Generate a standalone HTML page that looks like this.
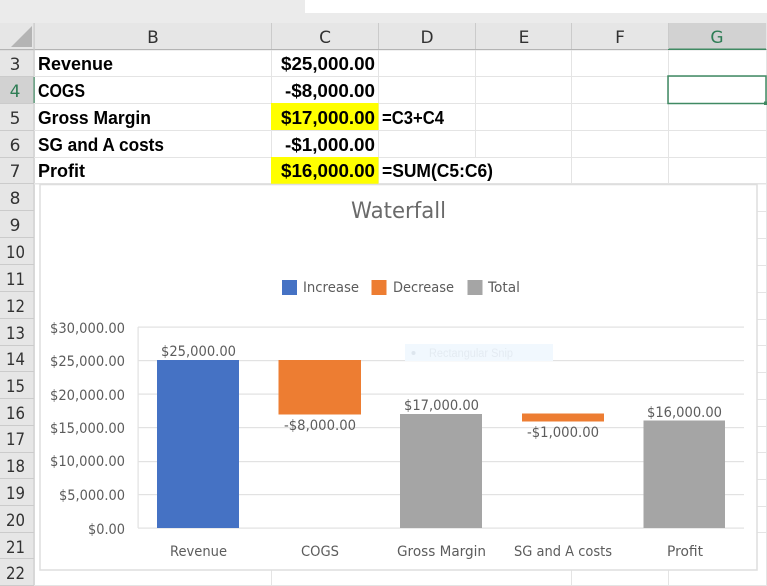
<!DOCTYPE html>
<html><head><meta charset="utf-8"><style>
html,body{margin:0;padding:0;background:#fff;width:767px;height:586px;overflow:hidden}
svg{display:block}
text{font-family:"Liberation Sans",sans-serif}
.h{font-family:"DejaVu Sans",sans-serif;font-size:17px;fill:#333;text-anchor:middle}
.b{font-size:18px;font-weight:bold;fill:#000}
.l{font-family:"DejaVu Sans",sans-serif;font-size:14.5px;fill:#5c5c5c}
</style></head><body>
<svg width="767" height="586" viewBox="0 0 767 586" xmlns="http://www.w3.org/2000/svg">
<g filter="url(#s)">
<rect width="767" height="586" fill="#fff"/>
<rect width="767" height="23" fill="#ebebeb"/>
<rect x="305" width="462" height="13" fill="#fff"/>
<rect y="23" width="767" height="26" fill="#e6e6e6"/>
<rect y="49" width="34" height="537" fill="#e6e6e6"/>
<rect x="0" y="76" width="34" height="27" fill="#d2d2d2"/>
<rect x="668" y="23" width="98" height="26" fill="#d2d2d2"/>
<rect x="0" y="49" width="767" height="1.2" fill="#b4b4b4"/>
<rect x="668" y="48.5" width="98" height="1.5" fill="#3f8a63"/>
<rect x="33.5" y="23" width="1.2" height="563" fill="#c8c8c8"/>
<rect x="33.5" y="76" width="1.2" height="27" fill="#3f8a63"/>
<polygon points="11,47 32,47 32,26" fill="#b4b4b4"/>
<g fill="#cbcbcb">
<rect x="271" y="23" width="1" height="26"/><rect x="378" y="23" width="1" height="26"/><rect x="475" y="23" width="1" height="26"/><rect x="571" y="23" width="1" height="26"/><rect x="668" y="23" width="1" height="26"/>
<rect y="183" width="34" height="1"/><rect y="210" width="34" height="1"/><rect y="237" width="34" height="1"/><rect y="264" width="34" height="1"/><rect y="291" width="34" height="1"/><rect y="318" width="34" height="1"/><rect y="345" width="34" height="1"/><rect y="371" width="34" height="1"/><rect y="398" width="34" height="1"/><rect y="425" width="34" height="1"/><rect y="452" width="34" height="1"/><rect y="478" width="34" height="1"/><rect y="505" width="34" height="1"/><rect y="532" width="34" height="1"/><rect y="558" width="34" height="1"/><rect y="585" width="34" height="1"/>
<rect y="76" width="34" height="1"/><rect y="103" width="34" height="1"/><rect y="130" width="34" height="1"/><rect y="157" width="34" height="1"/>
</g>
<g fill="#e4e4e4">
<rect x="271" y="50" width="1" height="133"/><rect x="378" y="50" width="1" height="133"/><rect x="475" y="50" width="1" height="107"/><rect x="571" y="50" width="1" height="133"/><rect x="668" y="50" width="1" height="133"/><rect x="766" y="50" width="1" height="536"/>
<rect x="34" y="76" width="733" height="1"/><rect x="34" y="103" width="733" height="1"/><rect x="34" y="130" width="733" height="1"/><rect x="34" y="157" width="733" height="1"/><rect x="34" y="183" width="733" height="1.5"/>
<rect x="271" y="570" width="1" height="16"/><rect x="571" y="570" width="1" height="16"/><rect x="668" y="570" width="1" height="16"/>
<rect x="757" y="211" width="10" height="1"/><rect x="757" y="238" width="10" height="1"/><rect x="757" y="265" width="10" height="1"/><rect x="757" y="292" width="10" height="1"/><rect x="757" y="319" width="10" height="1"/><rect x="757" y="345" width="10" height="1"/><rect x="757" y="372" width="10" height="1"/><rect x="757" y="399" width="10" height="1"/><rect x="757" y="426" width="10" height="1"/><rect x="757" y="452" width="10" height="1"/><rect x="757" y="479" width="10" height="1"/><rect x="757" y="506" width="10" height="1"/><rect x="757" y="532" width="10" height="1"/><rect x="34" y="585" width="733" height="1"/>
</g>
<rect x="271" y="103" width="107.5" height="27" fill="#ffff00"/>
<rect x="271" y="157" width="107.5" height="27" fill="#ffff00"/>
<rect x="668" y="76" width="98" height="27.5" fill="none" stroke="#3f8a63" stroke-width="1.5"/>
<rect x="764" y="101.5" width="3" height="3.5" fill="#3f8a63"/>

<text class="h" x="153" y="43">B</text><text class="h" x="325" y="43">C</text><text class="h" x="427" y="43">D</text><text class="h" x="524" y="43">E</text><text class="h" x="620" y="43">F</text><text class="h" x="717" y="43" style="fill:#2f7d55">G</text>
<text class="h" x="15" y="70">3</text><text class="h" x="15" y="97" style="fill:#2f7d55">4</text><text class="h" x="15" y="124">5</text><text class="h" x="15" y="151">6</text><text class="h" x="15" y="177">7</text><text class="h" x="15" y="204">8</text><text class="h" x="15" y="231">9</text><text class="h" x="15.500" y="258" textLength="19" lengthAdjust="spacingAndGlyphs">10</text><text class="h" x="15.500" y="285" textLength="19" lengthAdjust="spacingAndGlyphs">11</text><text class="h" x="15.500" y="312" textLength="19" lengthAdjust="spacingAndGlyphs">12</text><text class="h" x="15.500" y="339" textLength="19" lengthAdjust="spacingAndGlyphs">13</text><text class="h" x="15.500" y="365" textLength="19" lengthAdjust="spacingAndGlyphs">14</text><text class="h" x="15.500" y="392" textLength="19" lengthAdjust="spacingAndGlyphs">15</text><text class="h" x="15.500" y="419" textLength="19" lengthAdjust="spacingAndGlyphs">16</text><text class="h" x="15.500" y="445" textLength="19" lengthAdjust="spacingAndGlyphs">17</text><text class="h" x="15.500" y="472" textLength="19" lengthAdjust="spacingAndGlyphs">18</text><text class="h" x="15.500" y="499" textLength="19" lengthAdjust="spacingAndGlyphs">19</text><text class="h" x="15.500" y="526" textLength="19" lengthAdjust="spacingAndGlyphs">20</text><text class="h" x="15.500" y="553" textLength="19" lengthAdjust="spacingAndGlyphs">21</text><text class="h" x="15.500" y="579" textLength="19" lengthAdjust="spacingAndGlyphs">22</text>
<text class="b" x="38" y="70" textLength="75" lengthAdjust="spacingAndGlyphs">Revenue</text>
<text class="b" x="38" y="97" textLength="47" lengthAdjust="spacingAndGlyphs">COGS</text>
<text class="b" x="38" y="124" textLength="113" lengthAdjust="spacingAndGlyphs">Gross Margin</text>
<text class="b" x="38" y="151" textLength="126" lengthAdjust="spacingAndGlyphs">SG and A costs</text>
<text class="b" x="38" y="177" textLength="47" lengthAdjust="spacingAndGlyphs">Profit</text>
<text class="b" x="281" y="70" textLength="94" lengthAdjust="spacingAndGlyphs">$25,000.00</text>
<text class="b" x="285" y="97" textLength="90" lengthAdjust="spacingAndGlyphs">-$8,000.00</text>
<text class="b" x="281" y="124" textLength="94" lengthAdjust="spacingAndGlyphs">$17,000.00</text>
<text class="b" x="285" y="151" textLength="90" lengthAdjust="spacingAndGlyphs">-$1,000.00</text>
<text class="b" x="281" y="177" textLength="94" lengthAdjust="spacingAndGlyphs">$16,000.00</text>
<text class="b" x="382" y="124" textLength="62" lengthAdjust="spacingAndGlyphs">=C3+C4</text>
<text class="b" x="382" y="177" textLength="111" lengthAdjust="spacingAndGlyphs">=SUM(C5:C6)</text>

<rect x="40" y="184.500" width="717" height="385.500" fill="#fff" stroke="#dedede" stroke-width="1.5"/>
<text x="398.500" y="218" text-anchor="middle" font-size="22" fill="#6b6b6b" style="font-family:'DejaVu Sans',sans-serif" textLength="95" lengthAdjust="spacingAndGlyphs">Waterfall</text>
<rect x="282" y="280" width="15" height="15" fill="#4472c4"/>
<rect x="371.500" y="280" width="15" height="15" fill="#ed7d31"/>
<rect x="467.500" y="280" width="15" height="15" fill="#a5a5a5"/>
<text class="l" x="303" y="292" textLength="56" lengthAdjust="spacingAndGlyphs">Increase</text>
<text class="l" x="393" y="292" textLength="61" lengthAdjust="spacingAndGlyphs">Decrease</text>
<text class="l" x="488" y="292" textLength="32" lengthAdjust="spacingAndGlyphs">Total</text>

<g fill="#e2e2e2">
<rect x="138" y="326.500" width="606" height="1.2"/><rect x="138" y="360" width="606" height="1.2"/><rect x="138" y="393.500" width="606" height="1.2"/><rect x="138" y="427" width="606" height="1.2"/><rect x="138" y="461" width="606" height="1.2"/><rect x="138" y="494" width="606" height="1.2"/><rect x="138" y="527.500" width="606" height="1.2"/><rect x="137.500" y="327" width="1.2" height="201"/>
</g>
<rect x="405" y="344" width="148" height="17" fill="#f1f8fe"/>
<circle cx="413.500" cy="353" r="2" fill="#dde6ee"/>
<text x="429" y="357" font-size="11.500" fill="#e4ebf2" textLength="84" lengthAdjust="spacingAndGlyphs">Rectangular Snip</text>
<rect x="157" y="360" width="82" height="168" fill="#4472c4"/>
<rect x="278.500" y="360" width="82.500" height="54.500" fill="#ed7d31"/>
<rect x="400" y="414" width="82" height="114" fill="#a5a5a5"/>
<rect x="522" y="413.500" width="82" height="8" fill="#ed7d31"/>
<rect x="643.500" y="420.500" width="81.500" height="107.500" fill="#a5a5a5"/>

<text class="l" x="50" y="333" textLength="75" lengthAdjust="spacingAndGlyphs">$30,000.00</text>
<text class="l" x="50" y="366" textLength="75" lengthAdjust="spacingAndGlyphs">$25,000.00</text>
<text class="l" x="50" y="400" textLength="75" lengthAdjust="spacingAndGlyphs">$20,000.00</text>
<text class="l" x="50" y="433" textLength="75" lengthAdjust="spacingAndGlyphs">$15,000.00</text>
<text class="l" x="50" y="466" textLength="75" lengthAdjust="spacingAndGlyphs">$10,000.00</text>
<text class="l" x="59" y="500" textLength="66" lengthAdjust="spacingAndGlyphs">$5,000.00</text>
<text class="l" x="88" y="534" textLength="37" lengthAdjust="spacingAndGlyphs">$0.00</text>
<text class="l" x="161" y="356" textLength="75" lengthAdjust="spacingAndGlyphs">$25,000.00</text>
<text class="l" x="284" y="430" textLength="72" lengthAdjust="spacingAndGlyphs">-$8,000.00</text>
<text class="l" x="404" y="410" textLength="75" lengthAdjust="spacingAndGlyphs">$17,000.00</text>
<text class="l" x="527" y="437" textLength="72" lengthAdjust="spacingAndGlyphs">-$1,000.00</text>
<text class="l" x="647" y="417" textLength="75" lengthAdjust="spacingAndGlyphs">$16,000.00</text>
<text class="l" x="170" y="556" textLength="57" lengthAdjust="spacingAndGlyphs">Revenue</text>
<text class="l" x="301" y="556" textLength="38" lengthAdjust="spacingAndGlyphs">COGS</text>
<text class="l" x="397" y="556" textLength="89" lengthAdjust="spacingAndGlyphs">Gross Margin</text>
<text class="l" x="514" y="556" textLength="98" lengthAdjust="spacingAndGlyphs">SG and A costs</text>
<text class="l" x="667" y="556" textLength="36" lengthAdjust="spacingAndGlyphs">Profit</text>
</g>
<defs><filter id="s" x="0" y="0" width="100%" height="100%"><feGaussianBlur stdDeviation="0.35"/></filter></defs>
</svg>
</body></html>
